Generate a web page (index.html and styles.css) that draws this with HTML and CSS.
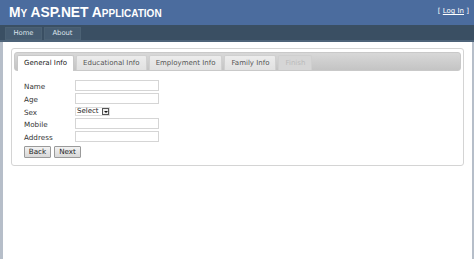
FILE: index.html
```html
<!DOCTYPE html>
<html>
<head>
<meta charset="utf-8">
<link rel="stylesheet" href="styles.css">
</head>
<body>
<div class="header">
  <div class="title">My ASP.NET Application</div>
  <div class="login">[ <a href="#">Log In</a> ]</div>
</div>
<div class="menu">
  <a class="menu-item" href="#">Home</a>
  <a class="menu-item" href="#">About</a>
</div>
<div class="main">
  <div class="tabs">
    <div class="tab-bar">
      <div class="tab active">General Info</div>
      <div class="tab">Educational Info</div>
      <div class="tab">Employment Info</div>
      <div class="tab">Family Info</div>
      <div class="tab disabled">Finish</div>
    </div>
    <div class="panel">
      <div class="form">
        <label class="lbl">Name</label><input class="txt" type="text">
        <label class="lbl">Age</label><input class="txt" type="text">
        <label class="lbl">Sex</label>
        <div class="select"><span class="sel-text">Select</span><span class="sel-btn"><span class="arrow"></span></span></div>
        <label class="lbl">Mobile</label><input class="txt" type="text">
        <label class="lbl">Address</label><input class="txt" type="text">
      </div>
      <div class="buttons">
        <button class="btn">Back</button>
        <button class="btn">Next</button>
      </div>
    </div>
  </div>
</div>
</body>
</html>
```
FILE: styles.css
```css
html, body {
  margin: 0;
  padding: 0;
  height: 100%;
}
body {
  background: #b6bec9;
  font-family: "DejaVu Sans", Verdana, sans-serif;
  font-size: 7px;
  color: #333;
  display: flex;
  flex-direction: column;
}
.header {
  background: #4b6c9e;
  height: 25px;
  display: flex;
  justify-content: space-between;
  align-items: flex-start;
  box-sizing: border-box;
}
.title {
  font-family: "Liberation Sans", Arial, sans-serif;
  font-variant: small-caps;
  font-weight: bold;
  font-size: 13.8px;
  color: #fff;
  padding: 5px 0 0 9px;
}
.login {
  color: #fff;
  font-size: 7px;
  padding: 7px 5px 0 0;
}
.login a {
  color: #fff;
}
.menu {
  background: #3a4f63;
  height: 15px;
  border-bottom: 2px solid #4d6379;
  display: flex;
  align-items: flex-end;
  padding-left: 5px;
  gap: 2px;
}
.menu-item {
  display: block;
  width: 37px;
  height: 13px;
  box-sizing: border-box;
  background: #465c71;
  border: 1px solid #4b6174;
  color: #dde4ec;
  text-decoration: none;
  font-size: 6.8px;
  text-align: center;
  line-height: 11px;
}
.main {
  flex: 1;
  background: #fff;
  margin: 0 2px 0 3px;
  padding: 6px 8px 0 8px;
}
.tabs {
  border: 1px solid #d4d4d4;
  border-radius: 3px;
  padding: 3px 2px 2px 2px;
  height: 118px;
  box-sizing: border-box;
}
.tab-bar {
  display: flex;
  gap: 2px;
  padding: 2px 2px 0 2px;
  height: 19px;
  box-sizing: border-box;
  background: linear-gradient(#d8d8d8, #c4c4c4);
  border: 1px solid #c9c9c9;
  border-radius: 3px;
}
.tab {
  height: 15px;
  box-sizing: border-box;
  padding: 0 6px;
  border: 1px solid #d0d0d0;
  border-bottom: none;
  background: linear-gradient(#ececec, #e1e1e1);
  color: #555;
  line-height: 14px;
  font-size: 7px;
  border-radius: 2px 2px 0 0;
}
.tab.active {
  background: #fff;
  color: #222;
  height: 16px;
  border-color: #c8c8c8;
}
.tab.disabled {
  color: #bbb;
  background: #d6d6d6;
  border-color: #cfcfcf;
}
.panel {
  padding: 9px 0 0 10px;
}
.form {
  display: grid;
  grid-template-columns: 51px 84px;
  grid-template-rows: 13px 13px 12px 13px 13px;
  align-items: start;
}
.lbl {
  font-size: 7.2px;
  color: #333;
  line-height: 11px;
  padding-top: 1px;
}
.txt {
  margin: 0;
  width: 84px;
  height: 11px;
  box-sizing: border-box;
  border: 1px solid #d5d5d5;
  padding: 0;
  background: #fff;
}
.select {
  display: inline-flex;
  align-items: center;
  width: 35px;
  height: 9px;
  box-sizing: border-box;
  margin-top: 1px;
  border: 1px solid #dcdcdc;
  font-size: 7px;
  color: #222;
  line-height: 7px;
}
.sel-text {
  padding-left: 1px;
  flex: 1;
}
.sel-btn {
  width: 7px;
  height: 7px;
  box-sizing: border-box;
  border: 1px solid #555;
  background: #eee;
  display: flex;
  align-items: center;
  justify-content: center;
}
.arrow {
  width: 0;
  height: 0;
  border-left: 2px solid transparent;
  border-right: 2px solid transparent;
  border-top: 2px solid #111;
}
.buttons {
  display: flex;
  gap: 3px;
  margin-top: 2px;
}
.btn {
  margin: 0;
  width: 27px;
  height: 12px;
  padding: 0;
  box-sizing: border-box;
  border: 1px solid #9a9a9a;
  border-radius: 1px;
  background: linear-gradient(#f2f2f2, #d8d8d8);
  font-family: "DejaVu Sans", Verdana, sans-serif;
  font-size: 7.2px;
  color: #222;
  line-height: 10px;
}
```
